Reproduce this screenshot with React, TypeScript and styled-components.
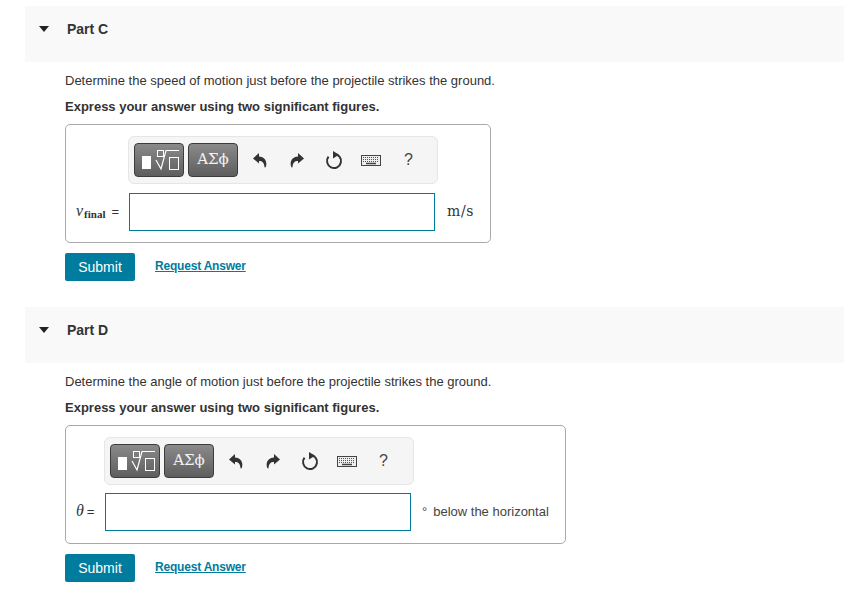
import React from 'react';
import styled, { createGlobalStyle } from 'styled-components';

const GlobalStyle = createGlobalStyle`
  html, body {
    margin: 0;
    padding: 0;
    background: #fff;
    font-family: "Liberation Sans", Arial, sans-serif;
    color: #333;
  }
`;

const Page = styled.div`
  width: 844px;
  height: 612px;
  overflow: hidden;
  padding: 6px 0 0 25px;
  box-sizing: border-box;
`;

const Section = styled.section`
  height: 301px;
`;

const PartHeader = styled.div`
  display: flex;
  align-items: flex-start;
  height: 56px;
  background: #f9f9f9;
  padding: 15px 0 0 14px;
  box-sizing: border-box;
`;

const Caret = styled.span`
  width: 0;
  height: 0;
  margin-top: 5px;
  border-left: 5px solid transparent;
  border-right: 5px solid transparent;
  border-top: 6px solid #222;
`;

const PartTitle = styled.h2`
  margin: 0 0 0 18px;
  font-size: 14px;
  line-height: 17px;
  font-weight: 700;
  color: #333;
`;

const Body = styled.div`
  padding: 6px 0 0 40px;
`;

const Prompt = styled.p`
  margin: 0;
  font-size: 13px;
  line-height: 26px;
  color: #333;
`;

const Instruction = styled(Prompt)`
  font-weight: 700;
`;

const AnswerBox = styled.div<{ $width: number }>`
  width: ${({ $width }) => $width}px;
  height: 119px;
  margin-top: 4px;
  padding: 11px 0 0 10px;
  box-sizing: border-box;
  border: 1px solid #aaa;
  border-radius: 5px;
`;

const Toolbar = styled.div<{ $indent: number }>`
  display: flex;
  align-items: center;
  width: 310px;
  height: 48px;
  margin-left: ${({ $indent }) => $indent}px;
  padding-left: 5px;
  box-sizing: border-box;
  background: #f5f5f5;
  border: 1px solid #e6e6e6;
  border-radius: 6px;
`;

const TemplateButton = styled.button`
  display: flex;
  align-items: center;
  justify-content: center;
  width: 50px;
  height: 34px;
  margin-right: 4px;
  padding: 0;
  border: 1px solid #3c3c3c;
  border-radius: 4px;
  background: linear-gradient(#8a8a8a, #5e5e5e);
  color: #f2f2f2;
  font-family: "DejaVu Serif", "Liberation Serif", serif;
  font-size: 15px;
`;

const SymbolButton = styled(TemplateButton)`
  padding-bottom: 3px;
`;

const ToolIcon = styled.span<{ $shift?: number }>`
  display: flex;
  align-items: center;
  justify-content: center;
  width: 37px;
  height: 34px;
  margin-left: ${({ $shift }) => $shift ?? 0}px;
  color: #444;
  font-size: 16px;
`;

const InputRow = styled.div<{ $gap: number }>`
  display: flex;
  align-items: center;
  margin-top: ${({ $gap }) => $gap}px;
`;

const Label = styled.div<{ $width: number }>`
  display: flex;
  align-items: baseline;
  width: ${({ $width }) => $width}px;
  margin-top: -3px;
  font-size: 12px;
  color: #333;
`;

const MathVar = styled.i`
  font-family: "Liberation Serif", serif;
  font-size: 16px;
`;

const MathSub = styled.sub`
  margin-left: 1px;
  font-family: "Liberation Serif", serif;
  font-size: 11px;
  font-weight: 700;
  line-height: 0;
  vertical-align: baseline;
  transform: translateY(2px);
`;

const Equals = styled.span<{ $gap: number }>`
  margin-left: ${({ $gap }) => $gap}px;
  font-size: 13px;
`;

const AnswerInput = styled.input`
  width: 306px;
  height: 38px;
  box-sizing: border-box;
  border: 1px solid #007c9e;
  border-radius: 0;
  background: #fff;
  outline: none;
`;

const UnitMath = styled.span`
  margin: -3px 0 0 12px;
  font-family: "DejaVu Serif", "Liberation Serif", serif;
  font-size: 14px;
  letter-spacing: 0.6px;
  color: #333;
`;

const UnitText = styled.span`
  margin: -1px 0 0 11px;
  font-size: 13px;
  color: #444;
`;

const Degree = styled.span`
  margin-right: 6px;
`;

const Actions = styled.div`
  display: flex;
  align-items: flex-start;
  margin-top: 10px;
`;

const SubmitButton = styled.button`
  width: 70px;
  height: 28px;
  padding: 0;
  border: none;
  border-radius: 2px;
  background: #007c9e;
  color: #fff;
  font-family: inherit;
  font-size: 14px;
  font-weight: 400;
`;

const RequestLink = styled.a`
  margin: 5px 0 0 20px;
  font-size: 12px;
  line-height: 16px;
  font-weight: 700;
  letter-spacing: -0.2px;
  color: #007c9e;
  text-decoration: underline;
`;

const TemplateIcon = () => (
  <svg width="48" height="32" viewBox="0 0 48 32" fill="none" stroke="#fff" strokeWidth="1">
    <rect x="7" y="12" width="9" height="13" fill="#fff" stroke="none" />
    <rect x="22.5" y="6.5" width="6" height="6" />
    <path d="M21 16l5 9 5-18.500h13" strokeWidth="1.200" />
    <rect x="34.5" y="13.500" width="9" height="12" />
  </svg>
);

const UndoIcon = () => (
  <svg width="14" height="15" viewBox="0 0 14 15" fill="#333">
    <path d="M6 0L0 5.500l6 5V8c3 0 5 1 5.500 6 .2.700.9.800 1.200.1C15 8 11 3.500 6 3.500z" />
  </svg>
);

const RedoIcon = () => (
  <svg width="14" height="15" viewBox="0 0 14 15" fill="#333">
    <path d="M8 0l6 5.500-6 5V8c-3 0-5 1-5.500 6-.2.700-.9.800-1.200.1C-1 8 3 3.500 8 3.500z" />
  </svg>
);

const ResetIcon = () => (
  <svg width="18" height="19" viewBox="0 0 18 19" fill="none" stroke="#333" strokeWidth="2">
    <path d="M3.500 5.700A7 7 0 1 0 9 3" />
    <path d="M8 0l6 3.800-6 3.700z" fill="#333" stroke="none" />
  </svg>
);

const KeyboardIcon = () => (
  <svg width="20" height="11" viewBox="0 0 20 11">
    <rect x=".5" y=".5" width="19" height="10" fill="#eee" stroke="#444" />
    <path d="M2 2.500h16M2 4.500h16M2 6.500h16" stroke="#555" strokeWidth="1" strokeDasharray="1 1" />
    <path d="M5 8.500h10" stroke="#444" strokeWidth="1.500" />
  </svg>
);

type Part = {
  title: string;
  prompt: string;
  boxWidth: number;
  labelWidth: number;
  inputGap: number;
  helpShift: number;
  label: React.ReactNode;
  unit: React.ReactNode;
};

const parts: Part[] = [
  {
    title: 'Part C',
    prompt: 'Determine the speed of motion just before the projectile strikes the ground.',
    boxWidth: 426,
    labelWidth: 53,
    inputGap: 9,
    helpShift: 1,
    label: (
      <>
        <MathVar>v</MathVar>
        <MathSub>final</MathSub>
        <Equals $gap={6}>=</Equals>
      </>
    ),
    unit: <UnitMath>m/s</UnitMath>,
  },
  {
    title: 'Part D',
    prompt: 'Determine the angle of motion just before the projectile strikes the ground.',
    boxWidth: 501,
    labelWidth: 29,
    inputGap: 8,
    helpShift: 0,
    label: (
      <>
        <MathVar>θ</MathVar>
        <Equals $gap={3}>=</Equals>
      </>
    ),
    unit: (
      <UnitText>
        <Degree>°</Degree>below the horizontal
      </UnitText>
    ),
  },
];

export default function App() {
  return (
    <Page>
      <GlobalStyle />
      {parts.map((part) => (
        <Section key={part.title}>
          <PartHeader>
            <Caret />
            <PartTitle>{part.title}</PartTitle>
          </PartHeader>
          <Body>
            <Prompt>{part.prompt}</Prompt>
            <Instruction>Express your answer using two significant figures.</Instruction>
            <AnswerBox $width={part.boxWidth}>
              <Toolbar $indent={part.labelWidth - 1}>
                <TemplateButton><TemplateIcon /></TemplateButton>
                <SymbolButton>ΑΣϕ</SymbolButton>
                <ToolIcon $shift={-1}><UndoIcon /></ToolIcon>
                <ToolIcon><RedoIcon /></ToolIcon>
                <ToolIcon><ResetIcon /></ToolIcon>
                <ToolIcon><KeyboardIcon /></ToolIcon>
                <ToolIcon $shift={part.helpShift}>?</ToolIcon>
              </Toolbar>
              <InputRow $gap={part.inputGap}>
                <Label $width={part.labelWidth}>{part.label}</Label>
                <AnswerInput />
                {part.unit}
              </InputRow>
            </AnswerBox>
            <Actions>
              <SubmitButton>Submit</SubmitButton>
              <RequestLink href="#">Request Answer</RequestLink>
            </Actions>
          </Body>
        </Section>
      ))}
    </Page>
  );
}
